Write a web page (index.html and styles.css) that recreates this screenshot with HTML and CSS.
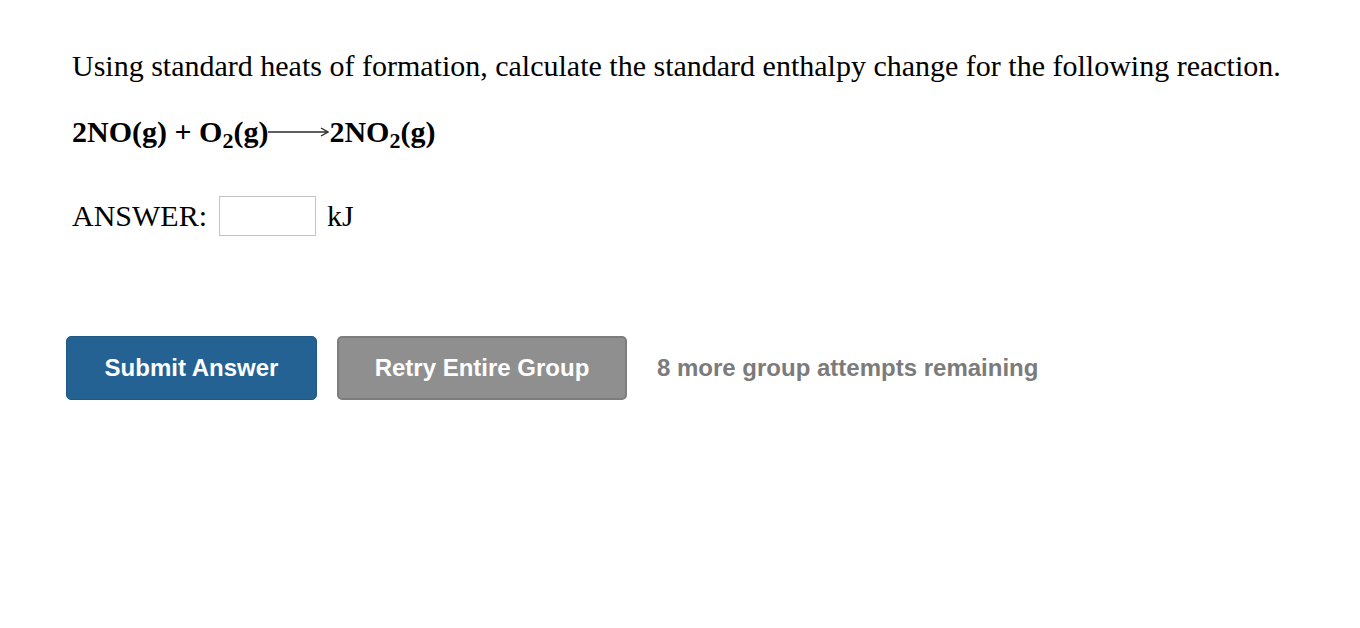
FILE: index.html
```html
<!DOCTYPE html>
<html>
<head>
<meta charset="utf-8">
<link rel="stylesheet" href="styles.css">
</head>
<body>
<div class="question">
  <p class="prompt">Using standard heats of formation, calculate the standard enthalpy change for the following reaction.</p>
  <p class="reaction">2NO(g) + O<sub>2</sub>(g)<span class="arrow"><svg width="61" height="12" viewBox="0 0 61 12"><line x1="0" y1="6" x2="59" y2="6" stroke="#2a2a2a" stroke-width="1.6"/><path d="M53 2 L60 6 L53 10" fill="none" stroke="#2a2a2a" stroke-width="1.4"/></svg></span>2NO<sub>2</sub>(g)</p>
  <div class="answer-row">
    <span class="label">ANSWER:</span>
    <input class="answer-input" type="text">
    <span class="unit">kJ</span>
  </div>
  <div class="actions">
    <button class="btn btn-submit">Submit Answer</button>
    <button class="btn btn-retry">Retry Entire Group</button>
    <span class="attempts">8 more group attempts remaining</span>
  </div>
</div>
</body>
</html>
```
FILE: styles.css
```css
html, body {
  margin: 0;
  padding: 0;
  background: #fff;
}
.question {
  padding: 44px 0 0 72px;
  font-family: "Liberation Serif", "Times New Roman", serif;
  color: #000;
}
.prompt {
  margin: 0;
  font-size: 30px;
  line-height: 44px;
}
.reaction {
  margin: 24px 0 0 0;
  font-size: 30px;
  font-weight: bold;
  line-height: 40px;
}
.reaction sub {
  font-size: 22px;
  line-height: 0;
  vertical-align: -6px;
}
.arrow {
  display: inline-block;
  vertical-align: 4px;
}
.arrow svg {
  display: block;
}
.answer-row {
  margin-top: 44px;
  display: flex;
  align-items: center;
  gap: 12px;
  font-size: 30px;
}
.answer-input {
  width: 97px;
  height: 40px;
  box-sizing: border-box;
  border: 1px solid #c4c4c4;
  padding: 0;
  margin: 0 -1px 0 0;
  outline: none;
}
.actions {
  margin-top: 100px;
  margin-left: -6px;
  display: flex;
  align-items: center;
  gap: 20px;
}
.btn {
  height: 64px;
  border-radius: 5px;
  font-family: "Liberation Sans", Arial, sans-serif;
  font-weight: bold;
  font-size: 24px;
  color: #fff;
  padding: 0;
  cursor: pointer;
}
.btn-submit {
  width: 251px;
  background: #236292;
  border: 1px solid #1f5884;
}
.btn-retry {
  width: 290px;
  background: #8f8f8f;
  border: 2px solid #7d7d7d;
}
.attempts {
  margin-left: 10px;
  font-family: "Liberation Sans", Arial, sans-serif;
  font-weight: bold;
  font-size: 24px;
  color: #7b7b7b;
}
```
